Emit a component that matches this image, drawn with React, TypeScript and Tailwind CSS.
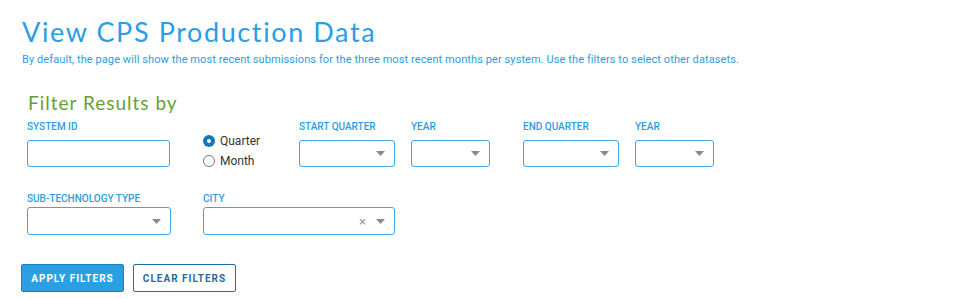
const blue = "text-[#2b9de4]";

function Caret() {
  return (
    <svg width="9" height="5" viewBox="0 0 9 5" className="shrink-0">
      <path d="M0 0h9L4.5 5z" fill="#8a8a8a" />
    </svg>
  );
}

function Field({
  label,
  width,
  labelH = "h-[19px]",
  children,
}: {
  label: string;
  width: string;
  labelH?: string;
  children?: React.ReactNode;
}) {
  return (
    <div className="flex flex-col">
      <label className={`${labelH} text-[10px] font-medium leading-[12px] uppercase ${blue}`}>{label}</label>
      <div
        className={`${width} flex items-center justify-end gap-[10px] rounded-[3px] border border-[#3ea6e6] bg-white pr-[9px]`}
      >
        {children}
      </div>
    </div>
  );
}

export default function App() {
  return (
    <div className="min-h-[299px] bg-white pl-[22px] font-['Roboto',sans-serif]">
      <h1 className={`pt-[17px] font-['Lato',sans-serif] text-[27px] leading-[30px] tracking-[1.6px] ${blue}`}>
        View CPS Production Data
      </h1>
      <p className={`mt-[6px] text-[11px] leading-[13px] tracking-[0.09px] ${blue}`}>
        By default, the page will show the most recent submissions for the three most recent months per system. Use the
        filters to select other datasets.
      </p>

      <div className="pl-[5px]">
        <h2 className="mt-[26px] pl-[1px] font-['Lato',sans-serif] text-[19px] leading-[22px] tracking-[1px] text-[#6b9e36]">
          Filter Results by
        </h2>

        <div className="mt-[7px] flex">
          <div className="w-[176px]">
            <Field label="System ID" width="w-[143px] h-[27px]" />
          </div>
          <div className="flex w-[96px] flex-col gap-[6px] pt-[13px] text-[12px] leading-[14px] text-[#333]">
            <label className="flex items-center gap-[5px]">
              <span className="flex h-[12px] w-[12px] items-center justify-center rounded-full bg-[#1677b8]">
                <span className="h-[4px] w-[4px] rounded-full bg-white" />
              </span>
              Quarter
            </label>
            <label className="flex items-center gap-[5px]">
              <span className="h-[12px] w-[12px] rounded-full border border-[#777]" />
              Month
            </label>
          </div>
          <div className="w-[112px]">
            <Field label="Start Quarter" width="w-[96px] h-[27px]">
              <Caret />
            </Field>
          </div>
          <div className="w-[112px]">
            <Field label="Year" width="w-[79px] h-[27px]">
              <Caret />
            </Field>
          </div>
          <div className="w-[112px]">
            <Field label="End Quarter" width="w-[96px] h-[27px]">
              <Caret />
            </Field>
          </div>
          <div>
            <Field label="Year" width="w-[79px] h-[27px]">
              <Caret />
            </Field>
          </div>
        </div>

        <div className="mt-[25px] flex">
          <div className="w-[176px]">
            <Field label="Sub-Technology Type" labelH="h-[14px]" width="w-[144px] h-[28px]">
              <Caret />
            </Field>
          </div>
          <Field label="City" labelH="h-[14px]" width="w-[192px] h-[28px]">
            <span className="text-[13px] leading-none text-[#999]">×</span>
            <Caret />
          </Field>
        </div>
      </div>

      <div className="mt-[29px] flex gap-[9px]">
        <button className="-ml-[1px] h-[28px] w-[103px] rounded-[2px] border border-[#1b80c4] bg-[#2a9fe4] text-[10px] font-bold tracking-[1px] text-white">
          APPLY FILTERS
        </button>
        <button className="h-[28px] w-[103px] rounded-[2px] border border-[#1d6fa8] bg-white text-[10px] font-bold tracking-[1px] text-[#2c6a9c]">
          CLEAR FILTERS
        </button>
      </div>
    </div>
  );
}
